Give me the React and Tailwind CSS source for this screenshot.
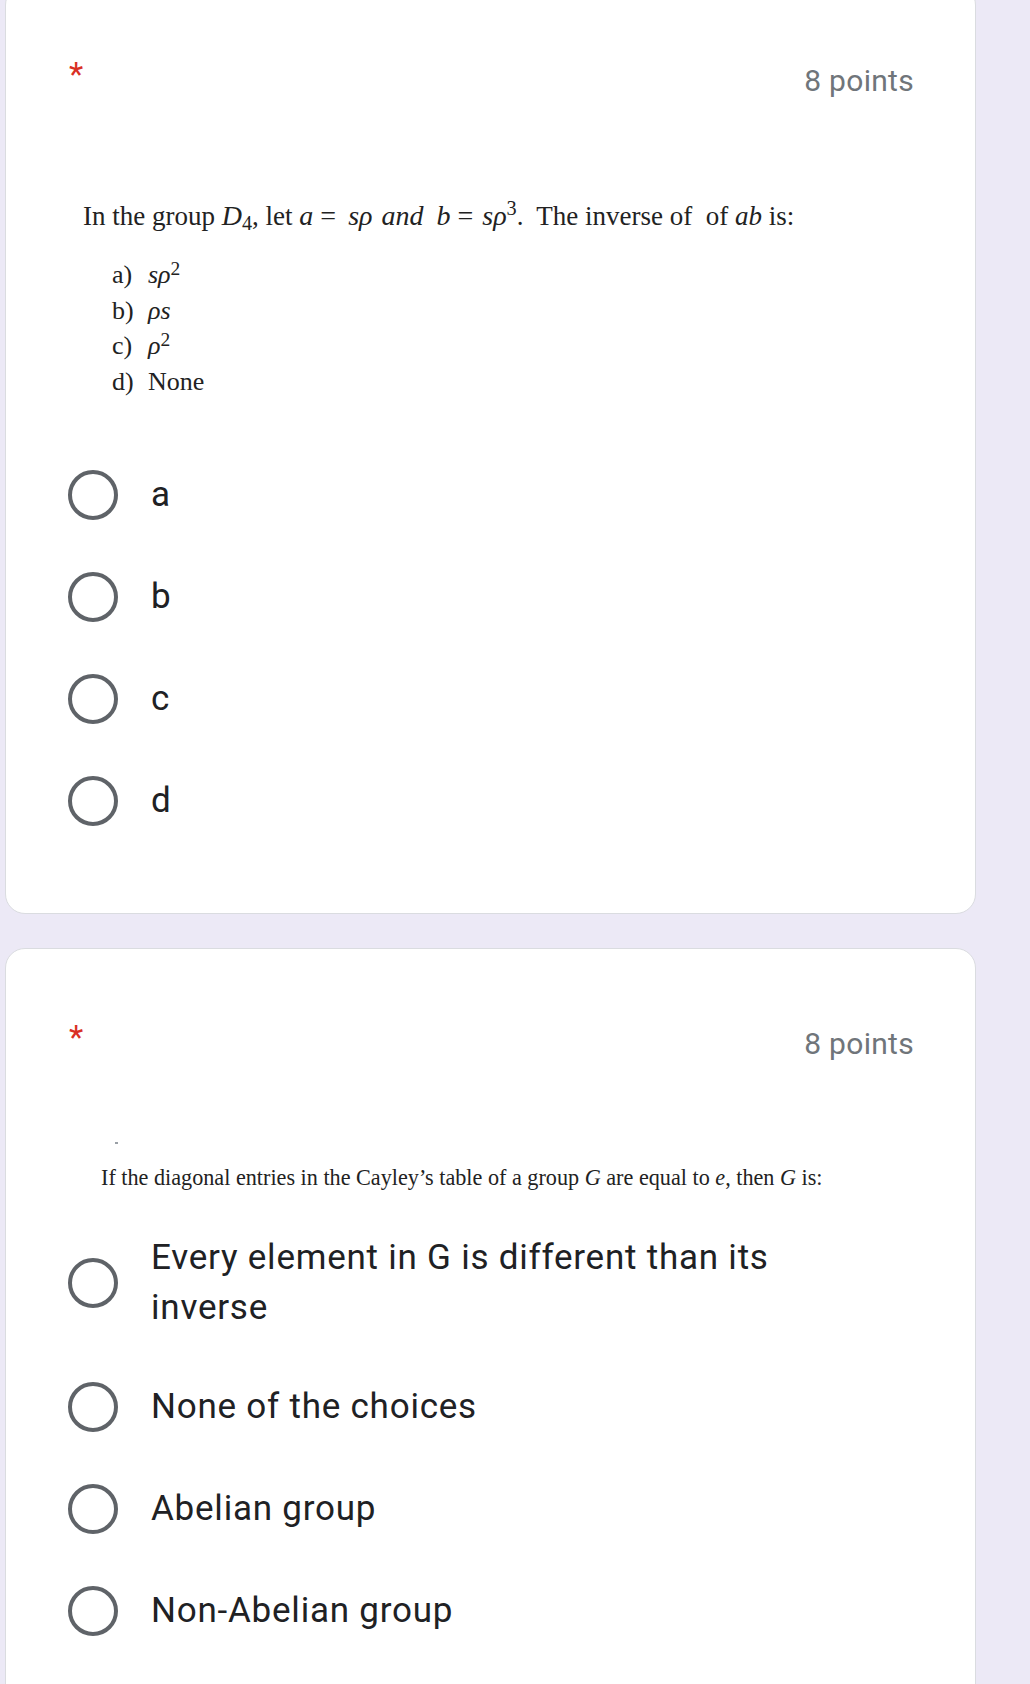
import React from "react";

function Radio({ children, multi }) {
  return (
    <div className="flex items-center">
      <div className="w-[50px] h-[50px] shrink-0 rounded-full border-[4px] border-[#5f6368]" />
      <div
        className={`ml-[33px] text-[35px] leading-[50px] tracking-[0.022em] text-[#202124] ${
          multi ? "max-w-[680px]" : ""
        }`}
      >
        {children}
      </div>
    </div>
  );
}

function CardHeader() {
  return (
    <div className="flex justify-between items-start pl-[63px] pr-[61px] h-[36px]">
      <span className="text-[33px] leading-[32px] -mt-[4px] text-[#d93025]">*</span>
      <span className="text-[30px] leading-[36px] tracking-[0.01em] text-[#70757a]">8 points</span>
    </div>
  );
}

export default function App() {
  const serif = "font-['Liberation_Serif',serif] text-[#222]";

  return (
    <div className="h-[1684px] overflow-hidden bg-[#ece9f6] pl-[5px] pr-[54px] font-['Roboto',sans-serif]">
      {/* question 1 */}
      <div className="-mt-[15px] rounded-[20px] border border-[#dadce0] bg-white pt-[77px] pb-[87px]">
        <CardHeader />

        <p className={`${serif} mt-[101px] pl-[77px] text-[27px] leading-[32px]`}>
          In the group <i className="text-[28px]">D</i>
          <sub>4</sub>, let <i className="text-[28px]">a</i>
          <span className="ml-[7px] mr-[12px] text-[28px]">=</span>
          <i className="text-[28px]">sρ</i>
          <i className="ml-[9px] text-[28px]">and</i>
          <i className="ml-[13px] text-[28px]">b</i>
          <span className="ml-[7px] mr-[9px] text-[28px]">=</span>
          <i className="text-[28px]">sρ</i>
          <sup>3</sup>.<span className="ml-[6px]"> The inverse of&nbsp; of <i>ab</i> is:</span>
        </p>

        <div className={`${serif} mt-[25px] pl-[106px] text-[26px] leading-[35.5px]`}>
          <div className="flex">
            <span className="w-[36px]">a)</span>
            <span>
              <i>sρ</i>
              <sup className="-top-[0.4em]">2</sup>
            </span>
          </div>
          <div className="flex">
            <span className="w-[36px]">b)</span>
            <i>ρs</i>
          </div>
          <div className="flex">
            <span className="w-[36px]">c)</span>
            <span>
              <i>ρ</i>
              <sup className="-top-[0.4em]">2</sup>
            </span>
          </div>
          <div className="flex">
            <span className="w-[36px]">d)</span>
            <span>None</span>
          </div>
        </div>

        <div className="mt-[71px] pl-[62px] flex flex-col gap-[52px]">
          <Radio>a</Radio>
          <Radio>b</Radio>
          <Radio>c</Radio>
          <Radio>d</Radio>
        </div>
      </div>

      {/* question 2 */}
      <div className="mt-[34px] rounded-[20px] border border-[#dadce0] bg-white pt-[77px] pb-[80px]">
        <CardHeader />

        <div className="mt-[80px] pl-[95px]">
          <div className="ml-[14px] mb-[20px] w-[3px] h-[2px] bg-[#9aa0a6]" />
          <p className={`${serif} text-[22.2px] leading-[28px]`}>
            If the diagonal entries in the Cayley’s table of a group <i>G</i> are equal to{" "}
            <i>e</i>, then <i>G</i> is:
          </p>
        </div>

        <div className="mt-[41px] pl-[62px] flex flex-col gap-[52px]">
          <div className="-mb-[3px]">
            <Radio multi>Every element in G is different than its inverse</Radio>
          </div>
          <Radio>None of the choices</Radio>
          <Radio>Abelian group</Radio>
          <Radio>Non-Abelian group</Radio>
        </div>
      </div>
    </div>
  );
}
